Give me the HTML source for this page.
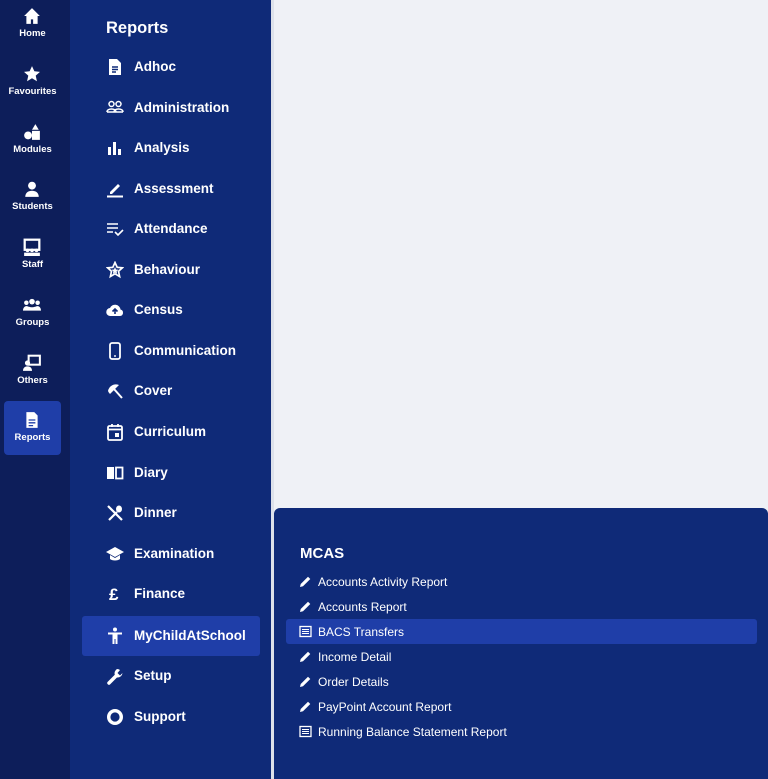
<!DOCTYPE html>
<html><head><meta charset="utf-8"><style>
*{margin:0;padding:0;box-sizing:border-box}
body{width:768px;height:779px;overflow:hidden;background:#eff1f6;font-family:"Liberation Sans",sans-serif;color:#fff;position:relative}
.rail{position:absolute;left:0;top:0;width:70px;height:779px;background:#0d1e5a}
.ri{position:absolute;left:4px;width:57px;height:54px;text-align:center;font-size:9.5px;font-weight:bold}
.ri svg{position:absolute;left:19px;top:5px}
.ri span{position:absolute;left:0;right:0;top:26px}
.ri.sel{background:#1f3ea8;border-radius:4px}
.ri.sel svg{top:10px}
.ri.sel span{top:31px}
.menu{position:absolute;left:70px;top:0;width:201px;height:779px;background:#0f2a78}
.edge{position:absolute;left:271px;top:0;width:3px;height:779px;background:#dde1ea}
.menu h1{position:absolute;left:36px;top:19px;font-size:16.5px;font-weight:bold}
.mi{position:absolute;left:12px;width:178px;height:40px;font-size:13.5px;font-weight:bold}
.mi span{position:absolute;left:52px;top:12px}
.mi svg{position:absolute;left:24px;top:11px}
.mi.sel{background:#1f3ea8;border-radius:3px}
.panel{position:absolute;left:274px;top:508px;width:494px;height:271px;background:#0f2a78;border-radius:6px 6px 0 0}
.panel h2{position:absolute;left:26px;top:37px;font-size:15px;font-weight:bold}
.pi{position:absolute;left:12px;width:471px;height:25px;font-size:12px}
.pi span{position:absolute;left:32px;top:6px}
.pi svg{position:absolute;left:13px;top:6px}
.pi.sel{background:#1f3ea8;border-radius:3px}
</style></head><body>
<div class="rail">
<div class="ri" style="top:2px"><svg width="18" height="18" viewBox="0 0 16 16"><path d="M8 1L1 8h2v7h4v-4h2v4h4V8h2z" fill="#fff"/></svg><span>Home</span></div>
<div class="ri" style="top:60px"><svg width="18" height="18" viewBox="0 0 16 16"><path d="M8 1l2.1 4.6 5 .5-3.8 3.3 1.1 5L8 11.8 3.6 14.4l1.1-5L.9 6.1l5-.5z" fill="#fff"/></svg><span>Favourites</span></div>
<div class="ri" style="top:118px"><svg width="18" height="18" viewBox="0 0 16 16"><circle cx="4.5" cy="11" r="3.5" fill="#fff"/><rect x="8" y="7" width="7" height="8" fill="#fff"/><path d="M11 1l3 5H8z" fill="#fff"/></svg><span>Modules</span></div>
<div class="ri" style="top:175px"><svg width="18" height="18" viewBox="0 0 16 16"><circle cx="8" cy="5" r="3.5" fill="#fff"/><path d="M2 15c0-4 3-5.5 6-5.5s6 1.5 6 5.5z" fill="#fff"/></svg><span>Students</span></div>
<div class="ri" style="top:233px"><svg width="18" height="18" viewBox="0 0 16 16"><rect x="1.5" y="1.5" width="13" height="9" fill="none" stroke="#fff" stroke-width="2"/><circle cx="4" cy="11" r="1.6" fill="#fff"/><circle cx="8" cy="11" r="1.6" fill="#fff"/><circle cx="12" cy="11" r="1.6" fill="#fff"/><rect x="1" y="13" width="14" height="3" fill="#fff"/></svg><span>Staff</span></div>
<div class="ri" style="top:291px"><svg width="18" height="18" viewBox="0 0 16 16"><circle cx="8" cy="5" r="2.5" fill="#fff"/><circle cx="3" cy="6" r="2" fill="#fff"/><circle cx="13" cy="6" r="2" fill="#fff"/><path d="M0 13c0-3 2-4 3-4s3 1 5 1 4-1 5-1 3 1 3 4z" fill="#fff"/></svg><span>Groups</span></div>
<div class="ri" style="top:349px"><svg width="18" height="18" viewBox="0 0 16 16"><rect x="5" y="1.5" width="10" height="8" fill="none" stroke="#fff" stroke-width="1.8"/><circle cx="4" cy="8" r="2.3" fill="#fff"/><path d="M0 15c0-3 2-4 4-4s4 1 4 4z" fill="#fff"/></svg><span>Others</span></div>
<div class="ri sel" style="top:401px"><svg width="18" height="18" viewBox="0 0 16 16"><path d="M3 1h7l3 3v11H3z" fill="#fff"/><path d="M5 8h6M5 10.5h6M5 13h4" stroke="#1f3ea8" stroke-width="1.2"/></svg><span>Reports</span></div>
</div>
<div class="menu">
<h1>Reports</h1>
<div class="mi" style="top:47px"><svg width="18" height="18" viewBox="0 0 18 18"><path d="M3 1h8l4 4v12H3z" fill="#fff"/><path d="M6 9h6M6 11.5h6M6 14h4" stroke="#0f2a78" stroke-width="1.4"/></svg><span>Adhoc</span></div>
<div class="mi" style="top:88px"><svg width="18" height="18" viewBox="0 0 18 18" fill="none" stroke="#fff" stroke-width="1.5"><circle cx="5.5" cy="5" r="2.5"/><circle cx="12.5" cy="5" r="2.5"/><path d="M1 13c0-2 2-3 4.5-3s4.5 1 4.5 3M8 13c0-2 2-3 4.5-3S17 11 17 13M1 13h16"/></svg><span>Administration</span></div>
<div class="mi" style="top:128px"><svg width="18" height="18" viewBox="0 0 18 18" fill="#fff"><rect x="2" y="8" width="3" height="8"/><rect x="7" y="3" width="3" height="13"/><rect x="12" y="10" width="3" height="6"/></svg><span>Analysis</span></div>
<div class="mi" style="top:169px"><svg width="18" height="18" viewBox="0 0 18 18"><path d="M4 12L12 4l2 2-8 8H4z" fill="#fff"/><rect x="1" y="15.5" width="16" height="2" fill="#fff"/></svg><span>Assessment</span></div>
<div class="mi" style="top:209px"><svg width="18" height="18" viewBox="0 0 18 18" stroke="#fff" stroke-width="1.6" fill="none"><path d="M1 4h11M1 8h11M1 12h6M9 12l3 3 5-5"/></svg><span>Attendance</span></div>
<div class="mi" style="top:250px"><svg width="18" height="18" viewBox="0 0 18 18"><path d="M9 1.5l2.2 4.8 5.2.5-3.9 3.5 1.1 5.2L9 12.8 4.4 15.5l1.1-5.2L1.6 6.8l5.2-.5z" fill="none" stroke="#fff" stroke-width="1.7"/><path d="M9 6l1 2.5 2.5.2-1.9 1.7.6 2.5L9 11.6l-2.2 1.3.6-2.5-1.9-1.7 2.5-.2z" fill="#fff"/></svg><span>Behaviour</span></div>
<div class="mi" style="top:290px"><svg width="18" height="18" viewBox="0 0 18 18"><path d="M4.5 15a4 4 0 0 1-.5-8 5.5 5.5 0 0 1 10.5 1.5 3.3 3.3 0 0 1-.5 6.5z" fill="#fff"/><path d="M9 13V8M6.5 10.5L9 8l2.5 2.5" stroke="#0f2a78" stroke-width="1.6" fill="none"/></svg><span>Census</span></div>
<div class="mi" style="top:331px"><svg width="18" height="18" viewBox="0 0 18 18"><rect x="4" y="1" width="10" height="16" rx="2" fill="none" stroke="#fff" stroke-width="1.8"/><path d="M8 14h2" stroke="#fff" stroke-width="1.4"/></svg><span>Communication</span></div>
<div class="mi" style="top:371px"><svg width="18" height="18" viewBox="0 0 18 18"><path d="M2 9a8 8 0 0 1 11-6L4 12A8 8 0 0 1 2 9z" fill="#fff"/><path d="M8 7l8 9" stroke="#fff" stroke-width="2"/></svg><span>Cover</span></div>
<div class="mi" style="top:412px"><svg width="18" height="18" viewBox="0 0 18 18"><rect x="2" y="3" width="14" height="14" rx="1.5" fill="none" stroke="#fff" stroke-width="1.8"/><path d="M2 6.5h14M6 1v3M12 1v3" stroke="#fff" stroke-width="1.8"/><rect x="9" y="10" width="4" height="4" fill="#fff"/></svg><span>Curriculum</span></div>
<div class="mi" style="top:453px"><svg width="18" height="18" viewBox="0 0 18 18"><path d="M1 3h7v12H1z" fill="#fff"/><path d="M10 3.5h6.5v11H10z" fill="none" stroke="#fff" stroke-width="1.8"/></svg><span>Diary</span></div>
<div class="mi" style="top:493px"><svg width="18" height="18" viewBox="0 0 18 18" stroke="#fff" stroke-width="2.2" fill="none"><path d="M2 2l14 14M3 16l8-8"/><ellipse cx="13" cy="5" rx="3" ry="3.5" fill="#fff" stroke="none"/></svg><span>Dinner</span></div>
<div class="mi" style="top:534px"><svg width="18" height="18" viewBox="0 0 18 18" fill="#fff"><path d="M9 2L0 7l9 5 9-5z"/><path d="M4 10v4c2 2 8 2 10 0v-4l-5 3z"/></svg><span>Examination</span></div>
<div class="mi" style="top:574px"><svg width="18" height="18" viewBox="0 0 18 18"><text x="3" y="15" font-family="Liberation Sans" font-weight="bold" font-size="17" fill="#fff">£</text></svg><span>Finance</span></div>
<div class="mi sel" style="top:616px"><svg width="18" height="18" viewBox="0 0 18 18" fill="#fff"><circle cx="9" cy="2.5" r="2"/><path d="M2 5.5h14v2h-4.5V17h-2v-5h-1v5h-2V7.5H2z"/></svg><span>MyChildAtSchool</span></div>
<div class="mi" style="top:656px"><svg width="18" height="18" viewBox="0 0 18 18"><path d="M3 16l7-7" stroke="#fff" stroke-width="3.5" stroke-linecap="round"/><path d="M11 2a5 5 0 0 0-2 6.5l2 2A5 5 0 0 0 16.5 6l-2.5 2.5-2.5-2.5L14 3A5 5 0 0 0 11 2z" fill="#fff"/></svg><span>Setup</span></div>
<div class="mi" style="top:697px"><svg width="18" height="18" viewBox="0 0 18 18"><circle cx="9" cy="9" r="6.3" fill="none" stroke="#fff" stroke-width="3.4"/></svg><span>Support</span></div>
</div>
<div class="edge"></div>
<div class="panel">
<h2>MCAS</h2>
<div class="pi" style="top:61px"><svg width="13" height="13" viewBox="0 0 13 13"><path d="M1 12l.7-3L9 1.7l2.3 2.3L4 11.3z" fill="#fff"/></svg><span>Accounts Activity Report</span></div>
<div class="pi" style="top:86px"><svg width="13" height="13" viewBox="0 0 13 13"><path d="M1 12l.7-3L9 1.7l2.3 2.3L4 11.3z" fill="#fff"/></svg><span>Accounts Report</span></div>
<div class="pi sel" style="top:111px"><svg width="13" height="13" viewBox="0 0 13 13"><rect x="1" y="1.5" width="11" height="10" fill="none" stroke="#fff" stroke-width="1.3"/><path d="M3 4.5h7M3 6.5h7M3 8.5h7" stroke="#fff" stroke-width="1"/></svg><span>BACS Transfers</span></div>
<div class="pi" style="top:136px"><svg width="13" height="13" viewBox="0 0 13 13"><path d="M1 12l.7-3L9 1.7l2.3 2.3L4 11.3z" fill="#fff"/></svg><span>Income Detail</span></div>
<div class="pi" style="top:161px"><svg width="13" height="13" viewBox="0 0 13 13"><path d="M1 12l.7-3L9 1.7l2.3 2.3L4 11.3z" fill="#fff"/></svg><span>Order Details</span></div>
<div class="pi" style="top:186px"><svg width="13" height="13" viewBox="0 0 13 13"><path d="M1 12l.7-3L9 1.7l2.3 2.3L4 11.3z" fill="#fff"/></svg><span>PayPoint Account Report</span></div>
<div class="pi" style="top:211px"><svg width="13" height="13" viewBox="0 0 13 13"><rect x="1" y="1.5" width="11" height="10" fill="none" stroke="#fff" stroke-width="1.3"/><path d="M3 4.5h7M3 6.5h7M3 8.5h7" stroke="#fff" stroke-width="1"/></svg><span>Running Balance Statement Report</span></div>
</div>
</body></html>
